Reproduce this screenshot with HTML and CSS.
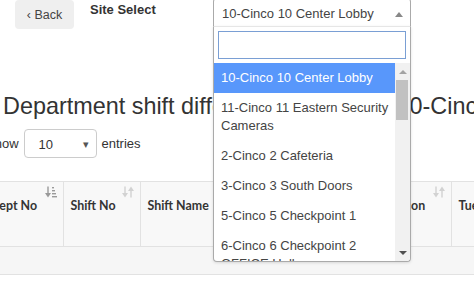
FILE: index.html
```html
<!DOCTYPE html>
<html lang="en">
<head>
<meta charset="utf-8">
<title>Department shift differential</title>
<link rel="stylesheet" href="styles.css">
</head>
<body>
<div class="topbar">
  <button class="back-btn">&lsaquo; Back</button>
  <div class="site-label">Site Select</div>
  <div class="site-select">
    <div class="select-box">
      <span class="select-value">10-Cinco 10 Center Lobby</span>
      <span class="select-arrow"></span>
    </div>
    <div class="dropdown">
      <div class="search-wrap"><input class="search" type="text"></div>
      <div class="results-wrap">
        <ul class="results">
          <li class="opt active">10-Cinco 10 Center Lobby</li>
          <li class="opt">11-Cinco 11 Eastern Security Cameras</li>
          <li class="opt">2-Cinco 2 Cafeteria</li>
          <li class="opt">3-Cinco 3 South Doors</li>
          <li class="opt">5-Cinco 5 Checkpoint 1</li>
          <li class="opt">6-Cinco 6 Checkpoint 2 OFFICE Hallway</li>
          <li class="opt">7-Cinco 7 Loading Dock</li>
        </ul>
        <div class="scrollbar">
          <div class="sb-btn"><span class="sb-up"></span></div>
          <div class="sb-thumb"></div>
          <div class="sb-track"></div>
          <div class="sb-btn"><span class="sb-down"></span></div>
        </div>
      </div>
    </div>
  </div>
</div>

<h1 class="title">Department shift differential Report in 10-Cinco 10 Center Lobby</h1>

<div class="length-row">
  <span>Show</span>
  <div class="len-select"><span>10</span><span class="len-arrow">&#9662;</span></div>
  <span>entries</span>
</div>

<table class="grid">
  <colgroup>
    <col class="c1"><col class="c2"><col class="c3"><col class="c4"><col class="c5"><col class="c6">
  </colgroup>
  <thead>
    <tr>
      <th><div class="th-in"><div class="sort"><svg class="ico dark" viewBox="0 0 12 12" width="12" height="12"><rect x="2.3" y="0.5" width="1.4" height="8"/><polygon points="0,7 6,7 3,11.5"/><rect x="7" y="1" width="2" height="1.4"/><rect x="7" y="4" width="3" height="1.4"/><rect x="7" y="7" width="4" height="1.4"/><rect x="7" y="10" width="5" height="1.4"/></svg></div><span>Dept No</span></div></th>
      <th><div class="th-in"><div class="sort"><svg class="ico" viewBox="0 0 12 12" width="12" height="12"><rect x="2.3" y="0.5" width="1.4" height="8"/><polygon points="0,7 6,7 3,11.5"/><rect x="8.3" y="3.5" width="1.4" height="8"/><polygon points="6,5 12,5 9,0.5"/></svg></div><span>Shift No</span></div></th>
      <th><div class="th-in"><div class="sort"></div><span>Shift Name</span></div></th>
      <th><div class="th-in"><div class="sort"></div><span>Sun</span></div></th>
      <th><div class="th-in"><div class="sort"><svg class="ico" viewBox="0 0 12 12" width="12" height="12"><rect x="2.3" y="0.5" width="1.4" height="8"/><polygon points="0,7 6,7 3,11.5"/><rect x="8.3" y="3.5" width="1.4" height="8"/><polygon points="6,5 12,5 9,0.5"/></svg></div><span>Mon</span></div></th>
      <th><div class="th-in"><div class="sort"></div><span>Tue</span></div></th>
    </tr>
  </thead>
  <tbody>
    <tr class="empty-row"><td colspan="6"></td></tr>
  </tbody>
</table>

<div class="footer">
  <span>Showing 0 to 0 of 0 entries</span>
</div>
</body>
</html>
```

FILE: styles.css
```css
html, body {
  margin: 0;
  padding: 0;
  overflow: hidden;
  background: #ffffff;
}
body {
  width: 474px;
  height: 286px;
  font-family: "Liberation Sans", Arial, sans-serif;
  color: #333333;
}

.topbar {
  display: flex;
  align-items: flex-start;
  height: 29px;
}
.back-btn {
  flex: 0 0 59px;
  margin-left: 15px;
  width: 59px;
  height: 29px;
  border: none;
  border-radius: 4px;
  background: #efefef;
  color: #444;
  font-family: "Liberation Sans", Arial, sans-serif;
  font-size: 12.5px;
  padding: 1px 0 0 0;
  text-align: center;
}
.site-label {
  flex: 0 0 139px;
  box-sizing: border-box;
  padding-left: 16px;
  margin-top: 2px;
  font-weight: bold;
  font-size: 13px;
  line-height: 15px;
  color: #333;
}
.site-select {
  position: relative;
  flex: 0 0 198px;
  width: 198px;
  margin-top: -2px;
  z-index: 5;
}
.select-box {
  box-sizing: border-box;
  height: 28px;
  border: 1px solid #aaaaaa;
  border-bottom: none;
  border-radius: 4px 4px 0 0;
  background: #fff;
  display: flex;
  align-items: center;
  justify-content: space-between;
  padding: 2px 7px 0 8px;
  font-size: 13px;
  color: #444;
}
.select-arrow {
  width: 0;
  height: 0;
  border-left: 4px solid transparent;
  border-right: 4px solid transparent;
  border-bottom: 5px solid #888;
  margin-top: 1px;
}
.dropdown {
  position: absolute;
  top: 28px;
  left: 0;
  width: 198px;
  box-sizing: border-box;
  background: #fff;
  border: 1px solid #aaaaaa;
  border-top: 1px solid #e6e6e6;
  border-radius: 0 0 4px 4px;
  box-shadow: 0 1px 3px rgba(0,0,0,0.12);
}
.search-wrap {
  padding: 4px;
}
.search {
  display: block;
  box-sizing: border-box;
  width: 100%;
  height: 28px;
  margin: 0;
  border: 1px solid #7a9fd4;
  border-radius: 0;
  outline: none;
  padding: 4px;
  font-size: 13px;
}
.results-wrap {
  display: flex;
  height: 198px;
  overflow: hidden;
  border-radius: 0 0 4px 4px;
}
.results {
  list-style: none;
  margin: 0;
  padding: 0;
  flex: 0 0 181px;
  font-size: 13px;
  line-height: 18px;
  color: #444;
}
.opt {
  padding: 6px 6px 6px 7px;
}
.opt.active {
  background: #5897fb;
  color: #ffffff;
}
.scrollbar {
  flex: 0 0 15px;
  display: flex;
  flex-direction: column;
  background: #f1f1f1;
}
.sb-btn {
  height: 17px;
  display: flex;
  align-items: center;
  justify-content: center;
}
.sb-up {
  width: 0; height: 0;
  border-left: 4px solid transparent;
  border-right: 4px solid transparent;
  border-bottom: 4px solid #a3a3a3;
}
.sb-down {
  width: 0; height: 0;
  border-left: 4px solid transparent;
  border-right: 4px solid transparent;
  border-top: 4px solid #505050;
}
.sb-thumb {
  height: 40px;
  margin: 0 2px 0 1px;
  background: #c1c1c1;
}
.sb-track {
  flex: 1;
}

.title {
  margin: 63px 0 0 3px;
  font-weight: normal;
  font-size: 23.4px;
  line-height: 28px;
  white-space: nowrap;
  color: #333;
}

.length-row {
  display: flex;
  align-items: center;
  height: 29px;
  margin: 9px 0 0 -14px;
  font-size: 13px;
  color: #333;
  white-space: nowrap;
}
.len-select {
  box-sizing: border-box;
  width: 73px;
  height: 29px;
  margin: 0 5px 0 5px;
  border: 1px solid #cccccc;
  border-radius: 4px;
  display: flex;
  align-items: center;
  justify-content: space-between;
  padding: 2px 7px 0 14px;
  font-size: 13px;
}
.len-arrow {
  font-size: 11px;
  color: #555;
}

.grid {
  margin: 23px 0 0 -17px;
  border-collapse: collapse;
  table-layout: fixed;
  width: 628px;
  font-family: Lato, "Open Sans", sans-serif;
}
.c1 { width: 80px; }
.c2 { width: 77px; }
.c3 { width: 120px; }
.c4 { width: 132px; }
.c5 { width: 59px; }
.c6 { width: 160px; }
.grid th {
  height: 65px;
  box-sizing: border-box;
  padding: 0;
  background: #f8f8f8;
  border-top: 1px solid #e2e2e2;
  border-bottom: 1px solid #e2e2e2;
  border-right: 1px solid #e2e2e2;
  vertical-align: top;
  text-align: left;
  font-weight: bold;
  font-size: 12.4px;
  color: #343434;
}
.th-in {
  display: flex;
  flex-direction: column;
  padding: 4px 7px 0 7px;
}
.sort {
  height: 13px;
  display: flex;
  justify-content: flex-end;
  margin-right: -1px;
}
.th-in span {
  margin-top: -2px;
  line-height: 18px;
  white-space: nowrap;
}
.ico { fill: #d2d2d2; }
.ico.dark { fill: #9a9a9a; }
.empty-row td {
  height: 27px;
  padding: 0;
  background: #f6f6f6;
  border-bottom: 1px solid #e2e2e2;
}

.footer {
  margin: 7px 0 0 -14px;
  font-size: 13px;
  line-height: 18px;
  color: #333;
  white-space: nowrap;
}
```
